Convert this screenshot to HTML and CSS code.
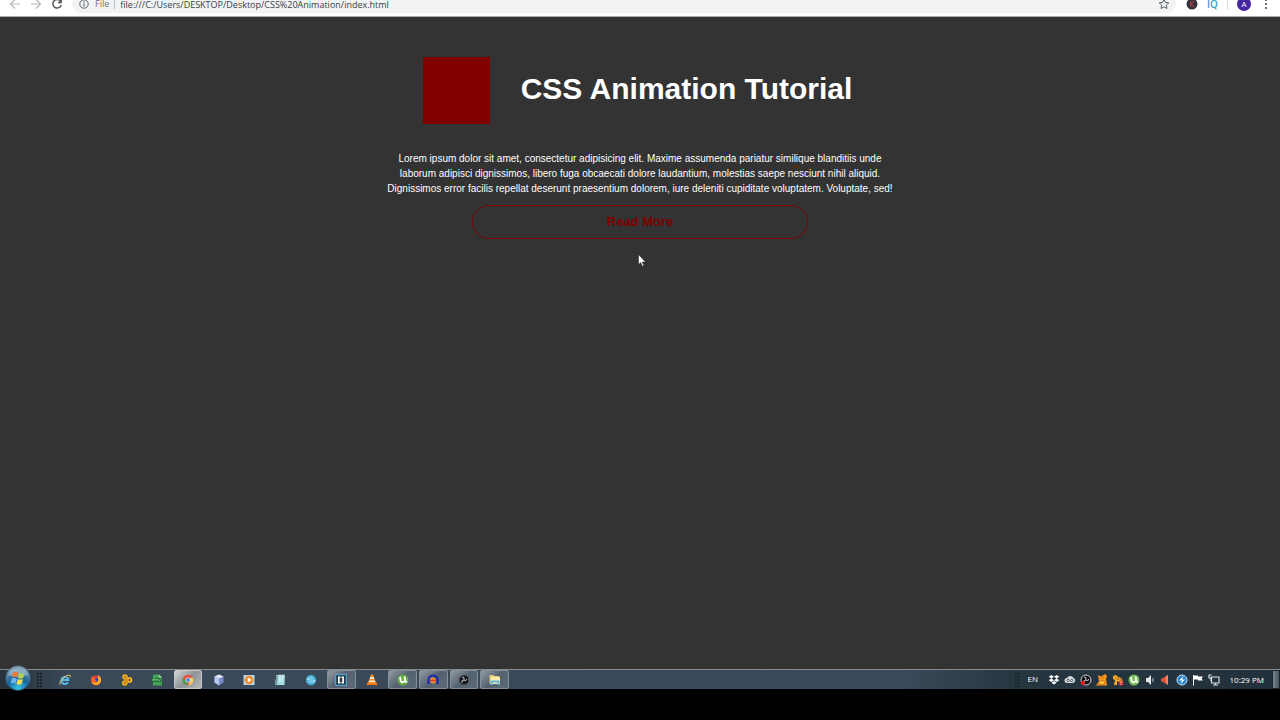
FILE: index.html
```html
<!DOCTYPE html>
<html lang="en">
<head>
<meta charset="utf-8">
<title>CSS Animation Tutorial</title>
<link rel="stylesheet" href="styles.css">
</head>
<body>
<header class="browser">
  <div class="toolbar">
    <nav class="nav">
      <button class="icon-button faded" aria-label="Back"><svg width="12" height="12" viewBox="0 0 12 12"><path d="M11 6H2M6 1.500L1.500 6L6 10.500" fill="none" stroke="currentColor" stroke-width="1.200"/></svg></button>
      <button class="icon-button faded" aria-label="Forward"><svg width="12" height="12" viewBox="0 0 12 12"><path d="M1 6h9M6 1.500L10.500 6L6 10.500" fill="none" stroke="currentColor" stroke-width="1.200"/></svg></button>
      <button class="icon-button" aria-label="Reload"><svg width="12" height="12" viewBox="0 0 12 12"><path d="M9.500 3A4.300 4.300 0 1 0 10.300 7" fill="none" stroke="currentColor" stroke-width="1.400"/><path d="M10.800 .8v4.400H6.400z" fill="currentColor"/></svg></button>
    </nav>
    <div class="address">
      <svg width="10" height="10" viewBox="0 0 10 10"><circle cx="5" cy="5" r="4.200" fill="none" stroke="#5f6368"/><path d="M5 4.300v3.200M5 2.300v1.200" stroke="#5f6368" stroke-width="1.100"/></svg>
      <label class="scheme" for="url">File</label>
      <input class="url" id="url" type="text" value="file:///C:/Users/DESKTOP/Desktop/CSS%20Animation/index.html">
      <button class="icon-button" aria-label="Bookmark"><svg width="12" height="12" viewBox="0 0 12 12"><path d="M6 1.300l1.400 3.100 3.400.4-2.500 2.300.7 3.400L6 8.800l-3 1.700.7-3.400L1.200 4.800l3.400-.4z" fill="none" stroke="#5f6368"/></svg></button>
    </div>
    <div class="extensions">
      <button class="icon-button" aria-label="Extension"><svg width="12" height="12" viewBox="0 0 12 12"><circle cx="6" cy="6" r="5.500" fill="#33343e"/><path d="M4.500 3v6M8 3L5 6l3 3" fill="none" stroke="#a33a42" stroke-width="1.200"/></svg></button>
      <button class="icon-button iq">IQ</button>
      <span class="divider"></span>
      <button class="avatar">A</button>
      <button class="icon-button" aria-label="Menu"><svg width="12" height="12" viewBox="0 0 12 12"><g fill="#4d5156"><circle cx="6" cy="2" r="1.100"/><circle cx="6" cy="6" r="1.100"/><circle cx="6" cy="10" r="1.100"/></g></svg></button>
    </div>
  </div>
</header>

<main class="page">
  <div class="hero">
    <div class="box"></div>
    <h1 class="title">CSS Animation Tutorial</h1>
  </div>
  <p class="intro">Lorem ipsum dolor sit amet, consectetur adipisicing elit. Maxime assumenda pariatur similique blanditiis unde laborum adipisci dignissimos, libero fuga obcaecati dolore laudantium, molestias saepe nesciunt nihil aliquid. Dignissimos error facilis repellat deserunt praesentium dolorem, iure deleniti cupiditate voluptatem. Voluptate, sed!</p>
  <a class="more" href="#">Read More</a>
  <svg class="pointer" width="8" height="13" viewBox="0 0 8 13"><path d="M.5.500v10l2.200-2 1.700 3.800 1.500-.7-1.700-3.600H7.500z" fill="#fff" stroke="#222" stroke-width=".5"/></svg>
</main>

<footer class="taskbar">
  <button class="start" aria-label="Start"><svg width="26" height="26" viewBox="0 0 26 26">
    <defs>
      <radialGradient id="orb" cx=".5" cy=".9" r=".85"><stop offset="0" stop-color="#35c8ea"/><stop offset=".5" stop-color="#17659a"/><stop offset="1" stop-color="#8aa5b5"/></radialGradient>
    </defs>
    <circle cx="13" cy="13" r="12.300" fill="url(#orb)" stroke="#36566c" stroke-width=".8"/>
    <path d="M3 10a10.500 9.500 0 0 1 20 0q-10 4-20 0z" fill="#d4e1e7" opacity=".4"/>
    <path d="M8 7.500q3-1.700 5 0l-1 5q-3-1.500-5 0z" fill="#ee793a"/><path d="M14 8q3 1.500 5.500 0l-1.300 5q-2.500 1.500-5.200 0z" fill="#b1d54d"/><path d="M6.700 13.500q2.500-1.500 5 0l-1.200 5q-2.500-1.500-5 0z" fill="#68b9e9"/><path d="M12.700 14q2.600 1.500 5.200 0l-1.300 5q-2.500 1.400-5 0z" fill="#ffda4f"/>
  </svg></button>
  <span class="grip"></span>
  <nav class="apps">
    <button class="app" aria-label="Internet Explorer"><svg viewBox="0 0 12 12"><path d="M9 8.300A3.500 3.500 0 1 1 9.400 6H3" fill="none" stroke="#55baf0" stroke-width="2"/><path d="M1 10.500C-.5 7 8-.5 11.200 1.500q.6.700-.5 2" fill="none" stroke="#e8c955"/></svg></button>
    <button class="app" aria-label="Firefox"><svg viewBox="0 0 12 12"><circle cx="6" cy="6.500" r="5" fill="#f43b2f"/><path d="M8 1q3.500 2 3 6-1 4-5 4Q2 11 1.500 7 3 9 6 8.500 9 7 8 4z" fill="#ffad25"/><circle cx="6" cy="5.700" r="2.300" fill="#38429a"/><path d="M1 6l1-4 2 2 1.500 0L5 6l2 1-2 1z" fill="#ff6b29"/></svg></button>
    <button class="app" aria-label="Media tool"><svg viewBox="0 0 12 12"><g fill="none" stroke="#f5ad18" stroke-width="2"><circle cx="4" cy="3" r="1.800"/><circle cx="8.500" cy="6" r="1.900"/><circle cx="3.800" cy="9" r="1.800"/></g><path d="M4 4l4 2-4 3z" fill="#d88b14"/></svg></button>
    <button class="app" aria-label="Document tool"><svg viewBox="0 0 12 12"><path d="M2 .5h6l3 3v8H2z" fill="#43a257"/><path d="M.5 4h10v4H.5z" fill="#286b3c"/><path d="M2 7V5h2v1H2M5 7V5l1 1 1-1v2M8 7l1.500-2" fill="none" stroke="#75d580" stroke-width=".8"/><path d="M8 .5v3h3z" fill="#b0dfb4"/></svg></button>
    <button class="app open current" aria-label="Chrome"><svg viewBox="0 0 12 12"><circle cx="6" cy="6" r="5.300" fill="#e74c3c"/><path d="M1.300 3.500L4.500 8 6 11.300A5.300 5.300 0 0 1 1.300 3.500z" fill="#3c9f54"/><path d="M6 11.300L8.500 7 8 3.700h2.800A5.300 5.300 0 0 1 6 11.300z" fill="#f6d34b"/><circle cx="6" cy="6" r="2.500" fill="#fff"/><circle cx="6" cy="6" r="1.900" fill="#4a83d5"/></svg></button>
    <button class="app" aria-label="VirtualBox"><svg viewBox="0 0 12 12"><path d="M6 .5l4.500 2v6L6 11.500l-4.500-3v-6z" fill="#7889c9"/><path d="M6 .5l4.500 2L6 4.500l-4.500-2z" fill="#e0e6fa"/><path d="M1.500 2.500l4.500 2v7l-4.500-3z" fill="#b9c6ed"/></svg></button>
    <button class="app" aria-label="Media Player"><svg viewBox="0 0 12 12"><path d="M.5 1h11v10H.5z" fill="#b7d4e9"/><circle cx="6" cy="6" r="4.300" fill="#f28b1d"/><path d="M4.700 3.500v5L8.700 6z" fill="#fff"/></svg></button>
    <button class="app" aria-label="Notepad"><svg viewBox="0 0 12 12"><path d="M2.500 1h8.500l-.5 10H1z" fill="#a9dce0"/><path d="M2.500 1L1 11l2 .5L4 2z" fill="#6c99a0"/><path d="M4 3h5M4 5h5M4 7h5M3 1v1M6 0v2M9 0v2" stroke="#e3faf9" stroke-width=".7"/></svg></button>
    <button class="app" aria-label="Web tool"><svg viewBox="0 0 12 12"><circle cx="6" cy="6" r="5.200" fill="#45acd3"/><path d="M2 6q2-4 6-2M3 8h6q2-2-1-2H5Q2 6 4 4" fill="none" stroke="#b2e5f4"/></svg></button>
    <button class="app open" aria-label="Brackets"><svg viewBox="0 0 12 12"><path d="M.7.700h10.600v10.600H.7z" fill="#263845" stroke="#4ab9e7"/><path d="M5.500 2.500H3v7h2.500V8h-.8V4h.8zM6.500 2.500H9v7H6.500V8h.8V4h-.8z" fill="#fff"/></svg></button>
    <button class="app" aria-label="VLC"><svg viewBox="0 0 12 12"><path d="M1.500 8h9l1 3H.5z" fill="#ec7718"/><path d="M5 .5h2l3 9H2z" fill="#f28d24"/><path d="M4.300 3h3.400l.7 2H3.600zM3 6.500h6l.5 1.500h-7z" fill="#eee1cf"/></svg></button>
    <button class="app open" aria-label="uTorrent"><svg viewBox="0 0 12 12"><circle cx="6" cy="6" r="5.500" fill="#67ae42"/><path d="M3 3l.5 3q.5 3 3 2l1.500-1M7.500 2.500l1 5 1.500 1" fill="none" stroke="#fff" stroke-width="1.800"/></svg></button>
    <button class="app open" aria-label="Audacity"><svg viewBox="0 0 12 12"><path d="M1.500 10V6a4.500 4.500 0 0 1 9 0v4" fill="none" stroke="#1824b8" stroke-width="2"/><circle cx="6" cy="6.500" r="3" fill="#f0a12a"/><path d="M3 6.500h6M4 5v3M6 4.500v4M8 5v3" stroke="#df3e28"/></svg></button>
    <button class="app open" aria-label="OBS Studio"><svg viewBox="0 0 12 12"><circle cx="6" cy="6" r="5" fill="#15171b" stroke="#59606a"/><path d="M4 3q3 0 2 3M9 5q-1 3-3 1M4 9q-1-3 2-3" fill="none" stroke="#c3c6ca"/></svg></button>
    <button class="app open" aria-label="Explorer"><svg viewBox="0 0 12 12"><path d="M.5 1h4l1 1H10v8H.5z" fill="#e3cb77"/><path d="M2 3h9v7H2z" fill="#f7e9a8"/><path d="M1.500 11V6.500h9V11h-2V8.500h-5V11z" fill="#65b6d9"/></svg></button>
  </nav>
  <span class="grip tray-grip"></span>
  <span class="language">EN</span>
  <div class="tray">
    <svg viewBox="0 0 12 12"><path d="M3.300 1L6 2.800 3.300 4.500.8 2.800zM8.700 1l2.500 1.800-2.500 1.700L6 2.800zM3.300 4.500L6 6.300 3.300 8 .8 6.300zM8.700 4.500l2.500 1.800L8.700 8 6 6.300zM3.500 8.800L6 7.100l2.500 1.700L6 10.500z" fill="#fff"/></svg>
    <svg viewBox="0 0 12 12"><path d="M3 9a2.500 2.500 0 0 1 0-5 3.600 3.600 0 0 1 6.500 0A2.600 2.600 0 0 1 9 9z" fill="#d8dce0"/><path d="M6.500 6L5 7.500Q3 8 2.700 6.500 3.500 4.500 5 5.500l2 2q2 .5 2-1-.5-2-2-1" fill="none" stroke="#46515d" stroke-width=".9"/></svg>
    <svg viewBox="0 0 12 12"><circle cx="6" cy="6" r="5" fill="#101216" stroke="#cdd0d3"/><path d="M4 3q3 0 2 3M9 5q-1 3-3 1M4 9q-1-3 2-3" fill="none" stroke="#ccc"/><circle cx="3" cy="9" r="2.200" fill="#e81c22"/></svg>
    <svg viewBox="0 0 12 12"><path d="M2 1l3 1.500L9 0l2 2-1 3 1 6.500H0L3 7z" fill="#ee9620"/><path d="M5 4l3-1M4 7h4l1 3H2z" fill="#ffd54a" stroke="#cc621b" stroke-width=".7"/></svg>
    <svg viewBox="0 0 12 12"><path d="M1 2l3-1 2 2 3 1 2 3v4H8L7 8 5 7v4H2l1-5-2-1z" fill="#f1ad27"/><path d="M3 3l3 3 1-2M8 5l2 2" stroke="#aa6514" fill="none"/><circle cx="9" cy="9" r="2.500" fill="#d42e29"/><path d="M9 7.500v1.700M9 10v.7" stroke="#fff"/></svg>
    <svg viewBox="0 0 12 12"><circle cx="6" cy="6" r="5.500" fill="#75bd57"/><path d="M3 3l.5 3q.5 3 3 2l1.500-1M7.500 2.500l1 5 1.500 1" fill="none" stroke="#fff" stroke-width="1.800"/></svg>
    <svg viewBox="0 0 12 12"><path d="M2 4h2l3-3v10L4 8H2z" fill="#e4e7e9"/><path d="M8.500 4q1.500 2 0 4" fill="none" stroke="#b9c0c7"/></svg>
    <svg viewBox="0 0 12 12"><path d="M1 5l7-4v10L1 7z" fill="#d75a37"/><path d="M6 2l2-1v10L6 9z" fill="#f28663"/></svg>
    <svg viewBox="0 0 12 12"><circle cx="6" cy="6" r="5" fill="#2785d0" stroke="#c6e1f5"/><path d="M7.500 2L3 6.500h3L4.500 10 9 5.500H6z" fill="#fff"/></svg>
    <svg viewBox="0 0 12 12"><path d="M1.500 1v10.500" stroke="#fff"/><path d="M2 1.500h4v1h5L9.500 4.500 11 6.500H6v-1H2z" fill="#fff"/></svg>
    <svg viewBox="0 0 12 12"><path d="M3.500 3h7.500v6H3.500zM5 11h5M7.500 9v2M.5 1h3M1 1v3h2v3" fill="none" stroke="#dce0e4" stroke-width="1.200"/></svg>
  </div>
  <time class="clock">10:29 PM</time>
  <button class="desktop" aria-label="Show desktop"></button>
</footer>
</body>
</html>
```
FILE: styles.css
```css
* {
  box-sizing: border-box;
}

body {
  margin: 0;
  min-height: 100vh;
  display: flex;
  flex-direction: column;
  background: #000;
  padding-bottom: 31px;
  font-family: "Liberation Sans", Arial, sans-serif;
}

button {
  border: 0;
  padding: 0;
  background: none;
  font: inherit;
}

svg {
  display: block;
}

.browser {
  height: 17px;
  overflow: hidden;
  display: flex;
  align-items: flex-end;
  background: #fff;
  border-bottom: 1px solid #aaacae;
}

.toolbar {
  flex: 1;
  height: 21px;
  display: flex;
  padding: 0 8px 3px 9px;
  font-family: "Open Sans", "Noto Sans", sans-serif;
  font-size: 9px;
}

.nav,
.extensions {
  display: flex;
  align-items: center;
}

.nav {
  gap: 9px;
  margin-right: 9px;
}

.icon-button {
  color: #4f5357;
}

.faded {
  color: #b5b7b9;
}

.address {
  flex: 1;
  display: flex;
  align-items: center;
  padding: 0 6px 0 7px;
  border-radius: 10px;
  background: #f1f3f4;
}

.scheme {
  margin-left: 6px;
  padding-right: 5px;
  border-right: 1px solid #babdc1;
  color: #73777b;
  line-height: 10px;
}

.url {
  flex: 1;
  min-width: 0;
  border: 0;
  padding: 0 0 0 5px;
  background: none;
  color: #3c4043;
  font: inherit;
}

.extensions {
  gap: 9px;
  padding-left: 10px;
}

.iq {
  color: #4499cb;
  font-weight: 600;
  font-size: 10px;
  line-height: 10px;
}

.divider {
  width: 1px;
  height: 12px;
  background: #dadce0;
}

.avatar {
  width: 14px;
  height: 14px;
  border-radius: 50%;
  background: #4527a0;
  color: #fff;
  font-size: 8px;
  line-height: 14px;
}

.page {
  flex: 1;
  position: relative;
  display: flex;
  flex-direction: column;
  align-items: center;
  padding-top: 40px;
  background: #333;
}

.hero {
  display: flex;
  align-items: center;
  gap: 31px;
}

.box {
  width: 67px;
  height: 67px;
  background: #800000;
}

.title {
  margin: 0;
  padding: 0 5px 3px 0;
  color: #fff;
  font-size: 30px;
  line-height: 36px;
}

.intro {
  max-width: 510px;
  margin: 27px 0 9px;
  color: #fff;
  font-size: 10px;
  line-height: 15px;
  text-align: center;
}

.more {
  width: 336px;
  border: 1px solid #800000;
  border-radius: 17px;
  color: #800000;
  font-size: 13px;
  font-weight: bold;
  line-height: 32px;
  text-align: center;
  text-decoration: none;
}

.pointer {
  position: absolute;
  top: 237px;
  left: 50%;
  margin-left: -2px;
}

.taskbar {
  height: 20px;
  display: flex;
  align-items: center;
  border-top: 1px solid #858b90;
  background: linear-gradient(90deg, #27323b 0, #3a4958 70px, #3b4a5a 900px, #263640 1020px, #22313b);
  color: #fff;
  font-family: "Open Sans", "Noto Sans", sans-serif;
  font-size: 8px;
}

.start {
  position: relative;
  margin: 0 6px 3px 5px;
}

.grip {
  width: 6px;
  height: 14px;
  margin-right: 7px;
  background: radial-gradient(circle at 1px 1px, #1b262e 1px, transparent 1px) 0 0 / 3px 3px;
}

.apps {
  width: 460px;
  height: 100%;
  display: grid;
  grid-template-columns: repeat(15, 1fr);
}

.app {
  display: flex;
  align-items: center;
  justify-content: center;
  margin: 0 1px;
}

.app svg,
.tray svg {
  width: 12px;
  height: 12px;
}

.open {
  border: 1px solid #86909a;
  border-radius: 2px;
  background: linear-gradient(135deg, #939ba2, #536170 50%, #5e6a76);
}

.current {
  border-color: #c5c7c9;
  background: linear-gradient(135deg, #d4d4d4, #8e9397 50%, #b5b8bb);
}

.tray-grip {
  margin-left: auto;
}

.language {
  width: 18px;
  padding-bottom: 3px;
}

.tray {
  display: grid;
  grid-template-columns: repeat(11, 16px);
  justify-items: center;
}

.clock {
  margin: 0 8px;
  white-space: nowrap;
}

.desktop {
  width: 8px;
  height: 100%;
  border: 1px solid #1b252d;
  background: linear-gradient(90deg, #79848c, #46535e);
}
```
